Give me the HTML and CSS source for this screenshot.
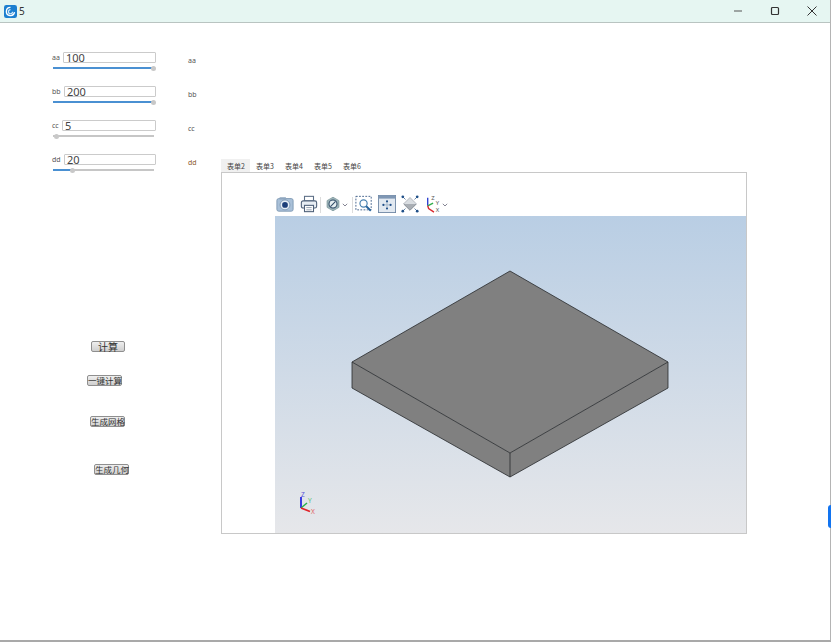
FILE: index.html
```html
<!DOCTYPE html>
<html lang="zh">
<head>
<meta charset="utf-8">
<title>5</title>
<link rel="stylesheet" href="styles.css">
</head>
<body>
<div class="window">
  <header class="titlebar">
    <svg class="app-icon" viewBox="0 0 14 14"><rect width="14" height="14" rx="2.5" fill="#1c7fd0"/><path d="M7 2.600a4.400 4.400 0 1 0 4.300 5.200" fill="none" stroke="#fff" stroke-width="1.500"/><path d="M7 5a2.200 2.200 0 1 0 2.200 2.200" fill="none" stroke="#cfe8fa" stroke-width="1.300"/></svg>
    <span class="title">5</span>
    <div class="controls">
      <svg viewBox="0 0 12 12"><path d="M2 6h8" stroke="#555" fill="none"/></svg>
      <svg viewBox="0 0 12 12"><rect x="2.500" y="2.500" width="7" height="7" rx="1" stroke="#333" stroke-width="1.200" fill="none"/></svg>
      <svg viewBox="0 0 12 12"><path d="M1.500 1.500l9 9M10.500 1.500l-9 9" stroke="#333" stroke-width="1" fill="none"/></svg>
    </div>
  </header>
  <main class="content">
    <section class="left">
      <div class="params">
        <div class="param">
          <div class="field"><span class="lbl">aa</span><input class="box w93" value="100"></div>
          <div class="slider"><i class="fill" style="width:98%"></i><i class="knob" style="left:97%"></i></div>
        </div>
        <div class="param">
          <div class="field"><span class="lbl">bb</span><input class="box w92" value="200"></div>
          <div class="slider"><i class="fill" style="width:98%"></i><i class="knob" style="left:97%"></i></div>
        </div>
        <div class="param">
          <div class="field"><span class="lbl">cc</span><input class="box w94" value="5"></div>
          <div class="slider"><i class="knob" style="left:1%"></i></div>
        </div>
        <div class="param">
          <div class="field"><span class="lbl">dd</span><input class="box w92" value="20"></div>
          <div class="slider"><i class="fill" style="width:19%"></i><i class="knob" style="left:17%"></i></div>
        </div>
      </div>
      <div class="actions">
        <button class="btn b1">计算</button>
        <button class="btn b2">一键计算</button>
        <button class="btn b3">生成网格</button>
        <button class="btn b4">生成几何</button>
      </div>
    </section>
    <section class="values">
      <span>aa</span><span>bb</span><span>cc</span><span class="brown">dd</span>
    </section>
    <section class="tabs">
      <nav class="tabbar">
        <span class="tab active">表单2</span><span class="tab">表单3</span><span class="tab">表单4</span><span class="tab">表单5</span><span class="tab">表单6</span>
      </nav>
      <div class="panel">
        <div class="toolbar">
          <svg class="ti i-cam" viewBox="0 0 20 20"><rect x="1" y="4" width="18" height="14" rx="2" fill="#a9c0d8" stroke="#7d97b2"/><rect x="4" y="2.500" width="7" height="2.500" fill="#8ea6bf"/><circle cx="10" cy="11" r="5.500" fill="#e6eef5" stroke="#7d97b2"/><circle cx="10" cy="11" r="3.200" fill="#1c3f78"/></svg>
          <svg class="ti i-print" viewBox="0 0 20 20"><rect x="5" y="1.500" width="10" height="5" fill="#fff" stroke="#5d6f86" stroke-width="1.200"/><rect x="1.500" y="6.500" width="17" height="8" rx="2" fill="#e8eef4" stroke="#4f6179" stroke-width="1.200"/><rect x="5" y="11.500" width="10" height="7" fill="#fff" stroke="#4f6179" stroke-width="1.200"/><path d="M7 14h6M7 16.500h6" stroke="#8a98a9"/></svg>
          <i class="sep s1"></i>
          <svg class="ti i-hide" viewBox="0 0 20 20"><path d="M10 1.500l7.400 4.300v8.400L10 18.500l-7.400-4.300V5.800z" fill="#9db4b8" stroke="#7c979c"/><circle cx="10" cy="10" r="5" fill="#e6eef0" stroke="#2e4a66" stroke-width="1.300"/><path d="M6.800 13.200l6.400-6.400" stroke="#2e4a66" stroke-width="1.300"/></svg>
          <svg class="chev c1" viewBox="0 0 6 4"><path d="M.8.800L3 3l2.200-2.200" fill="none" stroke="#667" stroke-width=".8"/></svg>
          <i class="sep s2"></i>
          <svg class="ti i-zoom" viewBox="0 0 20 20"><rect x="1" y="1.500" width="17" height="15" fill="none" stroke="#3a5a86" stroke-dasharray="2 1.500"/><circle cx="9.500" cy="9.500" r="4" fill="#fff" stroke="#4a82b0" stroke-width="1.300"/><path d="M12.500 12.500l5 5" stroke="#23619a" stroke-width="2"/></svg>
          <svg class="ti i-pan" viewBox="0 0 20 20"><rect x=".5" y=".5" width="19" height="19" fill="#e2e9f1" stroke="#6f88a5"/><rect x=".5" y=".5" width="19" height="3.500" fill="#7f97b4"/><path d="M10 7v8M6 11h8" stroke="#9fb2c6"/><circle cx="10" cy="7" r="1.200" fill="#1f4f88"/><circle cx="10" cy="15" r="1.200" fill="#1f4f88"/><circle cx="6" cy="11" r="1.200" fill="#1f4f88"/><circle cx="14" cy="11" r="1.200" fill="#1f4f88"/></svg>
          <svg class="ti i-fit" viewBox="0 0 20 20"><path d="M10 3l7 7-7 7-7-7z" fill="#a9aeb4" stroke="#7f868d"/><path d="M10 3l7 7H3z" fill="#d9dde1"/><path d="M2 2l3 3M18 2l-3 3M2 18l3-3M18 18l-3-3" stroke="#5e7c9c"/><circle cx="2" cy="2" r="1.500" fill="#1f4f88"/><circle cx="18" cy="2" r="1.500" fill="#1f4f88"/><circle cx="2" cy="18" r="1.500" fill="#1f4f88"/><circle cx="18" cy="18" r="1.500" fill="#1f4f88"/></svg>
          <svg class="ti i-axes" viewBox="0 0 20 20"><path d="M3 12V3" stroke="#2a3fd0" stroke-width="1.500"/><path d="M3 12l6-3" stroke="#2fae4a" stroke-width="1.500"/><path d="M3 12l1 3 6 4" stroke="#d9262c" stroke-width="1.500" fill="none"/><text x="7" y="5" class="ax">Z</text><text x="12" y="11" class="ax">Y</text><text x="12" y="19" class="ax">X</text></svg>
          <svg class="chev c2" viewBox="0 0 6 4"><path d="M.8.800L3 3l2.200-2.200" fill="none" stroke="#667" stroke-width=".8"/></svg>
        </div>
        <div class="viewer">
          <svg class="scene" viewBox="0 0 471 317">
            <path d="M77 146L235 55L393 146L235 237Z" fill="#808080"/>
            <path d="M77 146L235 237V261L77 172Z" fill="#808080"/>
            <path d="M393 146L235 237V261L393 172Z" fill="#808080"/>
            <path d="M77 146L235 55L393 146V172L235 261L77 172ZM77 146L235 237L393 146M235 237V261" fill="none" stroke="#26282b" stroke-width=".8"/>
          </svg>
          <svg class="triad" viewBox="0 0 20 24">
            <path d="M4 17V6" stroke="#2828e0" stroke-width="1.800"/>
            <path d="M4 17l6-5" stroke="#27b04a" stroke-width="1.500"/>
            <path d="M4 17l9 3.500" stroke="#e0242a" stroke-width="1.800"/>
            <text x="4" y="5.500" class="ax zt">Z</text><text x="11" y="12" class="ax yt">Y</text><text x="14" y="22.500" class="ax xt">X</text>
          </svg>
        </div>
      </div>
    </section>
  </main>
  <i class="edge-tab"></i>
</div>
</body>
</html>
```
FILE: styles.css
```css
* { box-sizing: border-box; }
html, body { margin: 0; padding: 0; }
body {
  width: 831px; height: 643px; overflow: hidden; background: #fff;
  font-family: "Noto Sans CJK SC", "Noto Sans", sans-serif; color: #444;
}
.window {
  position: relative; width: 831px; height: 642px;
  border-bottom: 2px solid #a9a9a9; border-right: 1px solid #b4b4b4;
  display: flex; flex-direction: column;
}
.titlebar {
  height: 23px; flex: none; background: #e6f6f2; border-bottom: 1px solid #b9c4c1;
  display: flex; align-items: center; padding-left: 4px;
}
.app-icon { width: 13px; height: 13px; }
.title { font: 10px "Noto Sans", sans-serif; margin-left: 2px; color: #333; }
.controls { margin-left: auto; display: flex; gap: 25px; padding-right: 12px; }
.controls svg { width: 12px; height: 12px; }
.content { flex: 1; display: flex; padding: 28px 0 0 0; min-height: 0; }
.left { width: 188px; flex: none; padding-left: 52px; }
.params { display: flex; flex-direction: column; gap: 9px; }
.param { height: 25px; width: 105px; }
.field { display: flex; justify-content: space-between; align-items: center; height: 12px; padding-right: 1px; }
.lbl { font: 7px "Noto Sans", sans-serif; color: #555; }
.box {
  height: 11px; padding: 0 2px; border: 1px solid #cbcbcb; border-radius: 1px;
  font: 11px/9px "Noto Sans", sans-serif; color: #444; background: #fff; outline: 0;
}
.w93 { width: 93px; } .w92 { width: 92px; } .w94 { width: 94px; }
.slider { position: relative; height: 2px; margin: 4px 0 0 1px; width: 101px; background: #c6c6c6; }
.fill { position: absolute; left: 0; top: 0; height: 2px; background: #4a90d2; }
.knob { position: absolute; top: -1.500px; width: 5px; height: 5px; border-radius: 50%; background: #c8c8c8; }
.actions { display: flex; flex-direction: column; align-items: flex-start; margin-top: 163px; }
.btn {
  height: 11px; padding: 0; border: 1px solid #8f8f8f; border-radius: 2px;
  background: linear-gradient(#efefef, #cfcfcf);
  font: 8.500px/9px "Noto Sans CJK SC", sans-serif; color: #333; white-space: nowrap;
  text-align: center;
}
.b1 { width: 34px; margin-left: 39px; font-size: 10px; letter-spacing: 0; }
.b2 { width: 35px; margin: 24px 0 0 35px; transform: none; margin-top: 23px; }
.b3 { width: 35px; margin: 30px 0 0 38px; }
.b4 { width: 35px; margin: 37px 0 0 42px; }
.values {
  width: 33px; flex: none; display: flex; flex-direction: column; gap: 24px;
  padding-top: 5px; font: 7px/10px "Noto Sans", sans-serif; color: #555;
}
.values .brown { color: #8a5a2c; }
.tabs { width: 526px; flex: none; margin-top: 108px; height: 375px; display: flex; flex-direction: column; }
.tabbar { height: 13px; flex: none; display: flex; }
.tab {
  width: 29px; padding: 1px 0 0 1px; text-align: center; font: 7px/13px "Noto Sans CJK SC", sans-serif; color: #444;
}
.tab.active { background: #f0f0f0; }
.panel { flex: 1; border: 1px solid #c8c8c8; display: flex; flex-direction: column; align-items: flex-end; min-height: 0; }
.toolbar {
  width: 471px; height: 43px; flex: none; display: flex; align-items: flex-end;
  padding: 0 0 3px 1px;
}
.ti { width: 18px; height: 18px; flex: none; }
.i-print { margin-left: 6px; }
.i-hide { width: 16px; height: 16px; margin: 0 0 1px 4px; }
.i-zoom { margin-left: 2px; }
.i-pan { margin-left: 5px; }
.i-fit { margin-left: 5px; }
.i-axes { margin-left: 6px; }
.sep { width: 1px; height: 16px; background: #dcdcdc; flex: none; }
.s1 { margin-left: 2px; }
.s2 { margin-left: 4px; }
.chev { width: 6px; height: 4px; margin-bottom: 6px; flex: none; }
.c1 { margin-left: 1px; }
.c2 { margin-left: -1px; }
.viewer {
  position: relative; width: 471px; flex: 1; min-height: 0;
  background: linear-gradient(#b9cee4, #e6e7ea);
}
.scene { display: block; width: 471px; height: 317px; }
.triad { position: absolute; left: 22px; top: 275px; width: 20px; height: 24px; }
.ax { font: 6.500px "Noto Sans", sans-serif; fill: #555; }
.zt { fill: #5a5ad8; } .yt { fill: #55c070; } .xt { fill: #e06060; }
.edge-tab { position: absolute; right: -1px; top: 505px; width: 3px; height: 23px; background: #1274f0; border-radius: 3px 0 0 3px; }
```
